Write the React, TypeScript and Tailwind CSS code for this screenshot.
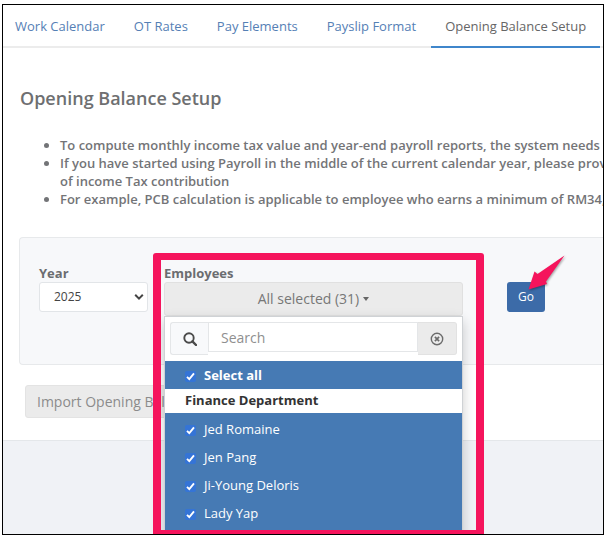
import { useState } from 'react'

const tabs = ['Work Calendar', 'OT Rates', 'Pay Elements', 'Payslip Format']
const employees = ['Jed Romaine', 'Jen Pang', 'Ji-Young Deloris', 'Lady Yap']

function Tick({ label, bold, className }: { label: string; bold?: boolean; className: string }) {
  const [on, setOn] = useState(true)
  return (
    <label className={`flex items-center gap-2 pl-5 text-[13px] text-white ${bold ? 'font-bold' : ''} ${className}`}>
      <span className="relative flex size-[11px]">
        <input
          type="checkbox"
          checked={on}
          onChange={() => setOn(!on)}
          className="size-full appearance-none rounded-[2px] bg-white checked:bg-[#3574d6]"
        />
        {on && (
          <svg viewBox="0 0 11 11" className="pointer-events-none absolute inset-0 size-full" fill="none" stroke="#fff" strokeWidth="1.9">
            <path d="M2 5.8 4.3 8.1 9 2.4" />
          </svg>
        )}
      </span>
      {label}
    </label>
  )
}

function EmployeeMenu() {
  return (
    <div className="absolute inset-x-0 top-full z-10 border border-[#cfd2d5] bg-white shadow-[0_5px_12px_rgba(0,0,0,0.2)]">
      <div className="flex items-start px-[5px] pt-[5px] pb-[6px]">
        <span className="flex h-[33px] w-[38px] shrink-0 items-center justify-center rounded-l-[3px] border border-r-0 border-[#e4e6e8] bg-[#f8f9fb]">
          <svg viewBox="0 0 14 14" className="size-[14px]" fill="none" stroke="#4a4a4a">
            <circle cx="6" cy="6" r="4.7" strokeWidth="1.9" />
            <path d="m9.4 9.4 3.6 3.6" strokeWidth="2.4" strokeLinecap="round" />
          </svg>
        </span>
        <input
          type="text"
          aria-label="Search employees"
          placeholder="Search"
          className="h-[30px] min-w-0 flex-1 border border-[#e4e6e8] bg-white px-3 text-sm text-[#666] outline-none placeholder:text-[#8f8f8f]"
        />
        <button type="button" aria-label="Clear search" className="flex h-[33px] w-[39px] shrink-0 items-center justify-center rounded-r-[3px] border border-l-0 border-[#e2e2e2] bg-[#ebebeb]">
          <svg viewBox="0 0 14 14" className="size-[14px]" fill="none" stroke="#6c6c6c">
            <circle cx="7" cy="7" r="5.7" strokeWidth="1.4" />
            <path d="m4.9 4.9 4.2 4.2m0-4.2L4.9 9.1" strokeWidth="1.7" />
          </svg>
        </button>
      </div>
      <Tick label="Select all" bold className="h-7 bg-[#467ab4] pt-[2px]" />
      <p className="h-6 pl-5 text-[13px] leading-[23px] font-bold text-[#333]">Finance Department</p>
      <div className="bg-[#467ab4] pt-[3px] pb-6">
        {employees.map((name) => (
          <Tick key={name} label={name} className="h-7" />
        ))}
      </div>
    </div>
  )
}

export default function App() {
  return (
    <div className="flex h-screen flex-col bg-white pt-1 pr-[3px] pb-[5px] pl-[2px] font-['Open_Sans',sans-serif] text-[13px] text-[#6b6d70]">
      <div className="relative flex flex-1 flex-col overflow-hidden border border-black bg-[#f0f2f6]">
        <div className="shrink-0 border-b border-[#e4e7ea] bg-white">
          <nav className="flex border-b-2 border-[#ececec] pr-1 whitespace-nowrap">
            {tabs.map((tab) => (
              <a key={tab} href="#" className="h-[41px] pr-[29px] leading-[43px] text-[#5580b5] first:pl-3">
                {tab}
              </a>
            ))}
            <a href="#" aria-current="page" className="-mb-[2px] -ml-[14px] h-[43px] border-b-2 border-[#3f86cb] px-[14px] leading-[43px] text-[#666]">
              Opening Balance Setup
            </a>
          </nav>

          <h1 className="mt-[38px] pl-[17px] text-lg leading-6 font-semibold text-[#6e6f71]">Opening Balance Setup</h1>

          <ul className="mt-[26px] list-disc pl-[57px] text-[13px] leading-[18px] font-semibold whitespace-nowrap text-[#737477]">
            <li>To compute monthly income tax value and year-end payroll reports, the system needs to</li>
            <li>
              If you have started using Payroll in the middle of the current calendar year, please provide
              <br />
              of income Tax contribution
            </li>
            <li>For example, PCB calculation is applicable to employee who earns a minimum of RM34,000</li>
          </ul>

          <form className="mt-[29px] ml-4 flex h-32 rounded-l border border-r-0 border-[#e7e9eb] bg-[#f7f8fa] pt-[26px] pl-[19px]">
            <div className="relative w-[109px]">
              <label htmlFor="year" className="block leading-[18px] font-bold">Year</label>
              <select id="year" defaultValue="2025" className="h-[30px] w-full appearance-none rounded-[3px] border border-[#e2e5e8] bg-white pl-[14px] text-xs text-[#444]">
                <option>2025</option>
              </select>
              <svg viewBox="0 0 10 8" className="pointer-events-none absolute top-[29px] right-1 h-2 w-[10px]" fill="none" stroke="#444" strokeWidth="2">
                <path d="m1.2 1.8 3.8 3.8 3.8-3.8" />
              </svg>
            </div>
            <div className="relative ml-4 h-[52px] w-[299px]">
              <label htmlFor="employees" className="block leading-[18px] font-bold">Employees</label>
              <button id="employees" type="button" className="flex h-[34px] w-full items-center justify-center gap-1 rounded-[3px] border border-[#e0e0e0] bg-[#ebebeb] text-sm text-[#777]">
                All selected (31)
                <span className="border-x-[3px] border-t-4 border-x-transparent border-t-[#666]" />
              </button>
              <EmployeeMenu />
            </div>
            <div className="relative ml-11 pt-[18px]">
              <button type="button" className="h-[30px] w-[38px] rounded-[3px] bg-[#3c6ba8] text-xs text-white">Go</button>
              <svg viewBox="0 0 38 38" className="pointer-events-none absolute -top-[10px] left-5 size-[38px] overflow-visible drop-shadow-[1px_1px_1px_rgba(0,0,0,0.35)]">
                <path d="M37.5 1.5 19 27.5l1 2.5L1.5 35.5 7.5 17.5l3 2.5Z" fill="#f5145c" />
              </svg>
            </div>
          </form>

          <div className="pt-5 pb-[22px] pl-[22px]">
            <button type="button" disabled className="h-[33px] rounded-[3px] border border-[#e3e3e3] bg-[#ebebeb] px-[11px] text-sm text-[#8b8b8b]">
              Import Opening Balance
            </button>
          </div>
        </div>

        <div className="pointer-events-none absolute top-[248px] bottom-0 left-[150px] z-20 w-[331px] rounded-t-[3px] border-x-[8px] border-t-[7px] border-b-4 border-[#f5145c]" />
      </div>
    </div>
  )
}
